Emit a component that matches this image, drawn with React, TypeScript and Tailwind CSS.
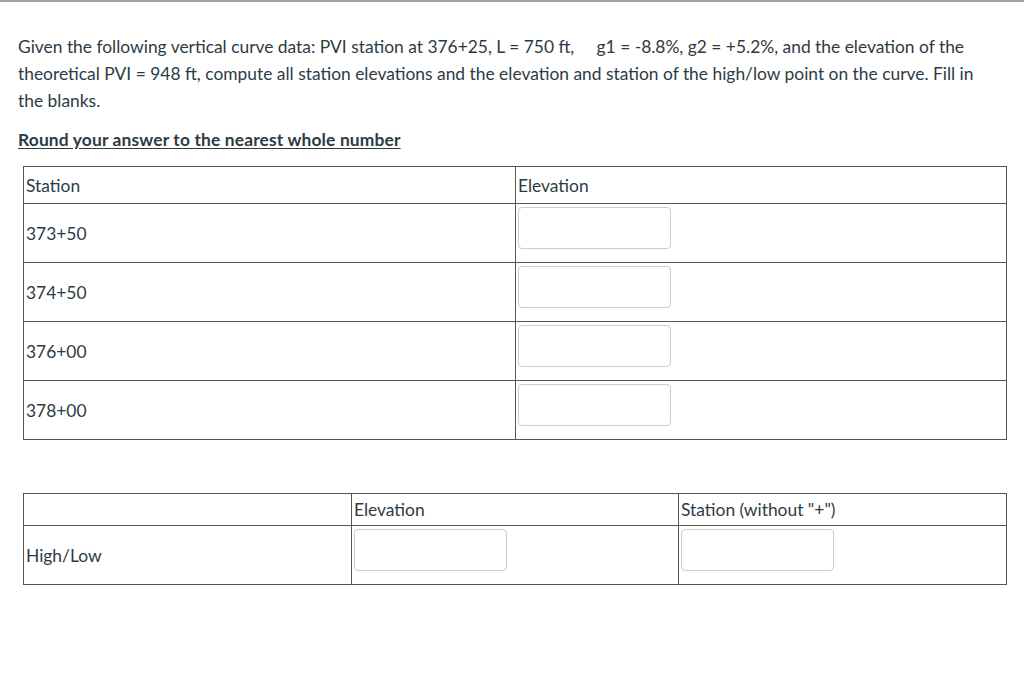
import React from 'react';

const stations = ['373+50', '374+50', '376+00', '378+00'];

function AnswerBox() {
  return (
    <input
      type="text"
      className="block w-[153px] h-[42px] rounded-[4px] border border-[#c7cdd1] bg-white px-2 outline-none"
    />
  );
}

export default function App() {
  return (
    <div
      className="min-h-[673px] bg-white border-t-2 border-[#a0a0a0] text-[#2d3b45] text-[17.4px] leading-[27px]"
      style={{ fontFamily: 'Lato, "Open Sans", sans-serif' }}
    >
      <div className="pl-[18px] pr-[17px] pt-[31px]">
        <p className="pr-[14px]">
          Given the following vertical curve data: PVI station at 376+25, L = 750 ft,&nbsp;&nbsp;&nbsp;&nbsp; g1 = -8.8%, g2 = +5.2%, and the elevation of the theoretical PVI = 948 ft, compute all station elevations and the elevation and station of the high/low point on the curve. Fill in the blanks.
        </p>
        <p className="mt-[12px] font-bold underline underline-offset-2 tracking-[0.15px]">
          Round your answer to the nearest whole number
        </p>

        <table className="mt-[13px] ml-[5px] w-[984px] border-collapse border border-[#555]">
          <tbody>
            <tr className="h-[37px]">
              <td className="w-[492px] border border-[#555] px-[2px] align-middle">Station</td>
              <td className="border border-[#555] px-[2px] align-middle">Elevation</td>
            </tr>
            {stations.map((s) => (
              <tr key={s} className="h-[59px]">
                <td className="border border-[#555] px-[2px] align-middle">{s}</td>
                <td className="border border-[#555] px-[2px] pt-[3px] align-top">
                  <AnswerBox />
                </td>
              </tr>
            ))}
          </tbody>
        </table>

        <table className="mt-[53px] ml-[5px] w-[984px] border-collapse border border-[#555]">
          <tbody>
            <tr className="h-[32px]">
              <td className="w-[328px] border border-[#555] px-[2px]"></td>
              <td className="w-[327px] border border-[#555] px-[2px] align-middle">Elevation</td>
              <td className="border border-[#555] px-[2px] align-middle">Station (without "+")</td>
            </tr>
            <tr className="h-[59px]">
              <td className="border border-[#555] px-[2px] align-middle">High/Low</td>
              <td className="border border-[#555] px-[2px] pt-[3px] align-top">
                <AnswerBox />
              </td>
              <td className="border border-[#555] px-[2px] pt-[3px] align-top">
                <AnswerBox />
              </td>
            </tr>
          </tbody>
        </table>
      </div>
    </div>
  );
}
